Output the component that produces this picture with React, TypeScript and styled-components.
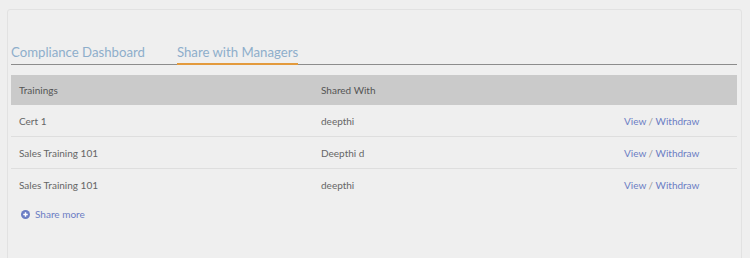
import React from "react";
import styled, { createGlobalStyle } from "styled-components";

const GlobalStyle = createGlobalStyle`
  html, body {
    margin: 0;
    padding: 0;
    background: #efefef;
    font-family: "Lato", "Liberation Sans", sans-serif;
  }
`;

// styled
const Page = styled.div`
  width: 750px;
  height: 258px;
  padding: 9px 8px 0 7px;
  box-sizing: border-box;
`;

const Panel = styled.div`
  height: 260px;
  border: 1px solid #e2e2e2;
  border-radius: 3px;
  background: #efefef;
  padding: 33px 4px 0 3px;
  box-sizing: border-box;
`;

const Tabs = styled.div`
  display: flex;
  gap: 32px;
  border-bottom: 1px solid #8c8c8c;
  margin-bottom: 10px;
`;

const Tab = styled.div<{ $active?: boolean }>`
  font-size: 13.2px;
  line-height: 19px;
  color: #8eaecb;
  padding-bottom: 1px;
  border-bottom: 2px solid ${(p) => (p.$active ? "#e39a3c" : "transparent")};
  margin-bottom: -1px;
`;

const Row = styled.div<{ $head?: boolean }>`
  display: grid;
  grid-template-columns: 302px 303px 1fr;
  height: ${(p) => (p.$head ? "30px" : "31px")};
  align-items: center;
  background: ${(p) => (p.$head ? "#cacaca" : "transparent")};
  border-top: ${(p) => (p.$head ? "none" : "1px solid #dedede")};
  font-size: 10px;
  color: ${(p) => (p.$head ? "#555" : "#666")};
  &:nth-child(2) {
    border-top: none;
  }
`;

const Cell = styled.div`
  padding-left: 8px;
`;

const Links = styled.div`
  padding-left: 8px;
  color: #999;
`;

const Link = styled.a`
  color: #6b7dc4;
  text-decoration: none;
  cursor: pointer;
`;

const ShareMore = styled.a`
  display: flex;
  align-items: center;
  gap: 5px;
  margin: 8px 0 0 10px;
  font-size: 10px;
  color: #6b7dc4;
  cursor: pointer;
`;

const rows = [
  { training: "Cert 1", shared: "deepthi" },
  { training: "Sales Training 101", shared: "Deepthi d" },
  { training: "Sales Training 101", shared: "deepthi" },
];

function App() {
  return (
    <Page>
      <GlobalStyle />
      <Panel>
        <Tabs>
          <Tab>Compliance Dashboard</Tab>
          <Tab $active>Share with Managers</Tab>
        </Tabs>
        <div>
          <Row $head>
            <Cell>Trainings</Cell>
            <Cell>Shared With</Cell>
            <Cell />
          </Row>
          {rows.map((r, i) => (
            <Row key={i}>
              <Cell>{r.training}</Cell>
              <Cell>{r.shared}</Cell>
              <Links>
                <Link>View</Link> / <Link>Withdraw</Link>
              </Links>
            </Row>
          ))}
        </div>
        <ShareMore>
          <svg width="9" height="9" viewBox="0 0 10 10">
            <circle cx="5" cy="5" r="5" fill="#6b7dc4" />
            <path d="M5 2.5v5M2.5 5h5" stroke="#fff" strokeWidth="1.6" />
          </svg>
          Share more
        </ShareMore>
      </Panel>
    </Page>
  );
}

export default App;
